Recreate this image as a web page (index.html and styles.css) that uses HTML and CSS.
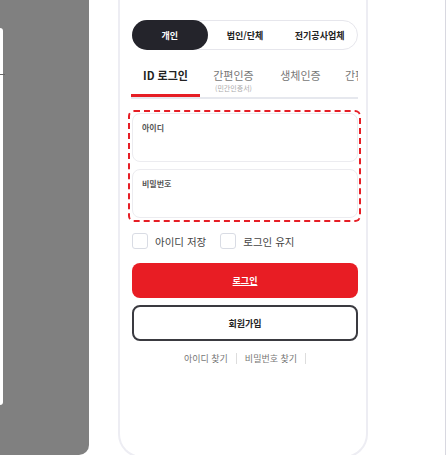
FILE: index.html
```html
<!DOCTYPE html>
<html lang="ko">
<head>
  <meta charset="UTF-8" />
  <meta name="viewport" content="width=device-width, initial-scale=1.0"/>
  <title>로그인</title>
  <link rel="stylesheet" href="styles.css">
</head>
<body>
  <div class="page">
    <div class="side">
      <div class="side-sheet">
        <div class="side-rule"></div>
      </div>
    </div>

    <div class="card">
      <div class="segment">
        <div class="seg active">개인</div>
        <div class="seg">법인/단체</div>
        <div class="seg">전기공사업체</div>
      </div>

      <div class="tabs">
        <div class="tab active">ID 로그인</div>
        <div class="tab">간편인증<span class="sub">(민간인증서)</span></div>
        <div class="tab">생체인증</div>
        <div class="tab">간편로그인</div>
      </div>

      <div class="fields">
        <div class="field"><label>아이디</label></div>
        <div class="field"><label>비밀번호</label></div>
      </div>

      <div class="checks">
        <div class="check"><span class="box"></span>아이디 저장</div>
        <div class="check"><span class="box"></span>로그인 유지</div>
      </div>

      <button class="btn btn-login"><u>로그인</u></button>
      <button class="btn btn-join">회원가입</button>

      <div class="links">
        <span>아이디 찾기</span>
        <span class="bar"></span>
        <span>비밀번호 찾기</span>
        <span class="bar"></span>
      </div>
    </div>

    <div class="rest"></div>
  </div>
</body>
</html>
```

FILE: styles.css
```css
body {
  margin: 0;
  background: #fff;
  font-family: "Noto Sans CJK KR", "Noto Sans", sans-serif;
  overflow: hidden;
}
.page {
  display: flex;
  height: 455px;
}
.side {
  width: 89px;
  height: 455px;
  background: #808080;
  border-bottom-right-radius: 10px;
  padding-top: 28px;
  box-sizing: border-box;
}
.side-sheet {
  width: 3px;
  height: 377px;
  background: #fff;
  border-radius: 0 4px 4px 0;
  padding-top: 46px;
  box-sizing: border-box;
}
.side-rule {
  width: 5px;
  height: 1px;
  background: #666;
}
.card {
  width: 250px;
  height: 458px;
  margin-left: 29px;
  border: 2px solid #ededf3;
  border-top: 0;
  border-radius: 0 0 24px 24px;
  box-sizing: border-box;
  padding: 20px 8px 0 12px;
  background: #fff;
}
.segment {
  display: grid;
  grid-template-columns: repeat(3, 1fr);
  height: 30px;
  width: 226px;
  border: 1px solid #e6e6ec;
  border-radius: 15px;
  box-sizing: border-box;
}
.seg {
  display: flex;
  align-items: center;
  justify-content: center;
  font-size: 9px;
  font-weight: bold;
  color: #222;
  border-radius: 15px;
  margin: -1px;
}
.seg.active {
  background: #24242b;
  color: #fff;
  margin-right: 0;
}
.tabs {
  display: flex;
  width: 227px;
  margin-top: 12px;
  overflow: hidden;
  border-bottom: 2px solid #e6e8ee;
  margin-left: -1px;
}
.tab {
  flex: 0 0 67px;
  height: 35px;
  display: flex;
  flex-direction: column;
  align-items: center;
  padding-top: 6px;
  box-sizing: border-box;
  font-size: 11px;
  color: #777;
  line-height: 14px;
  white-space: nowrap;
}
.tab:last-child {
  flex-basis: 40px;
  align-items: flex-start;
  padding-left: 11px;
}
.tab.active {
  flex-basis: 69px;
  color: #222;
  font-weight: bold;
  box-shadow: inset 0 -3px 0 #e61e25;
}
.sub {
  font-size: 7px;
  color: #aaa;
  line-height: 10px;
  margin-top: 1px;
}
.fields {
  margin: 11px 0 0 -4px;
  width: 233px;
  height: 112px;
  border: 2px dashed #e61e25;
  border-radius: 6px;
  box-sizing: border-box;
  padding: 1px 1px 0 2px;
  display: flex;
  flex-direction: column;
  gap: 7px;
}
.field {
  height: 49px;
  border: 1px solid #ececf0;
  border-radius: 8px;
  padding: 9px 9px;
  box-sizing: border-box;
}
.field label {
  display: block;
  font-size: 8px;
  line-height: 10px;
  font-weight: bold;
  color: #555;
}
.checks {
  display: flex;
  gap: 14px;
  margin-top: 11px;
  height: 16px;
}
.check {
  display: flex;
  align-items: center;
  gap: 7px;
  font-size: 10.5px;
  color: #444;
}
.box {
  width: 16px;
  height: 16px;
  border: 1px solid #d9dce4;
  border-radius: 3px;
  box-sizing: border-box;
}
.btn {
  display: block;
  width: 226px;
  border-radius: 8px;
  font-family: inherit;
  font-size: 9px;
  font-weight: bold;
  box-sizing: border-box;
}
.btn-login {
  margin-top: 14px;
  height: 35px;
  border: 0;
  background: #e81d24;
  color: #fff;
}
.btn-join {
  margin-top: 7px;
  height: 36px;
  border: 2px solid #3a3a40;
  background: #fff;
  color: #222;
}
.links {
  display: flex;
  justify-content: center;
  align-items: center;
  gap: 8px;
  margin-top: 11px;
  width: 226px;
  font-size: 9px;
  color: #777;
}
.bar {
  width: 1px;
  height: 11px;
  background: #ddd;
}
.rest {
  flex: 1;
  border-right: 1px solid #d8d8e0;
}
```
